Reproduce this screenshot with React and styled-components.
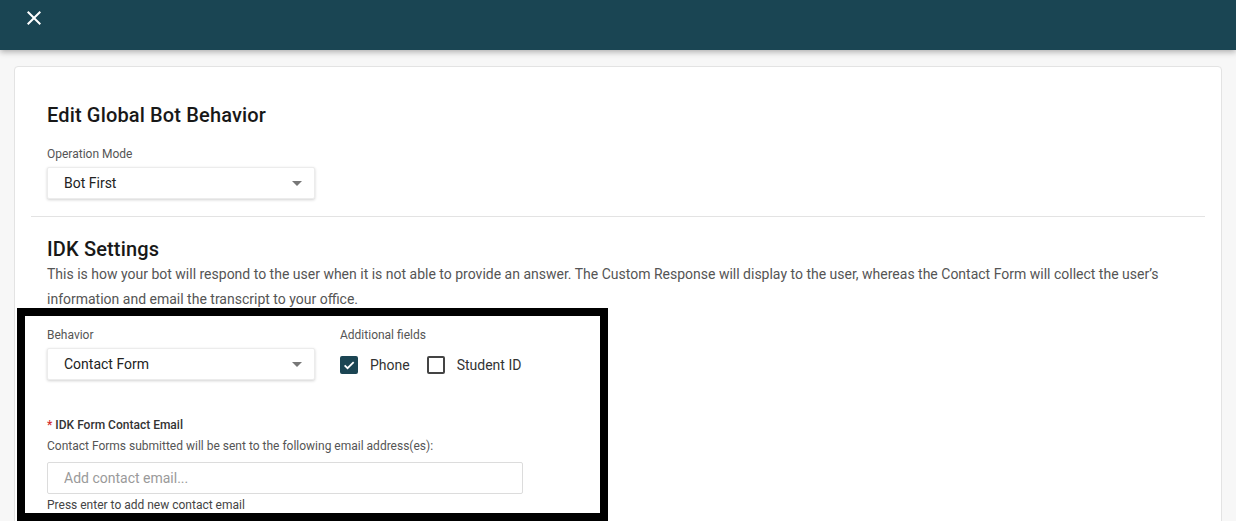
import React from "react";
import styled, { createGlobalStyle } from "styled-components";

const GlobalStyle = createGlobalStyle`
  html, body {
    margin: 0;
    padding: 0;
    background: #f7f7f7;
    font-family: Roboto, "Liberation Sans", Arial, sans-serif;
    overflow: hidden;
  }
`;

const Header = styled.header`
  height: 50px;
  background: #1a4553;
  box-shadow: 0 2px 6px rgba(0, 0, 0, 0.3);
  display: flex;
  align-items: center;
  padding-left: 22px;
  position: relative;
  z-index: 1;
`;

const CloseButton = styled.button`
  width: 24px;
  height: 24px;
  margin-top: -14px;
  padding: 0;
  border: none;
  background: transparent;
  display: flex;
  align-items: center;
  justify-content: center;
  cursor: pointer;
`;

const Page = styled.main`
  padding: 16px 14px 0;
`;

const Card = styled.div`
  background: #fff;
  border: 1px solid #e3e3e3;
  border-radius: 4px;
  padding: 36px 16px 80px;
`;

const Section = styled.section`
  padding: 0 16px;
`;

const Title = styled.h2`
  margin: 0;
  font-size: 20px;
  line-height: 24px;
  font-weight: 500;
  letter-spacing: 0.15px;
  color: #181818;
`;

const Label = styled.div`
  font-size: 12px;
  line-height: 16px;
  color: ${(p) => (p.$strong ? "#333" : "#555")};
  font-weight: ${(p) => (p.$strong ? 500 : 400)};
  margin-top: ${(p) => p.$mt || 0}px;
`;

const Required = styled.span`
  color: #d32f2f;
  margin-right: 3px;
`;

const SelectBox = styled.div`
  margin-top: 5px;
  width: 268px;
  height: 32px;
  box-sizing: border-box;
  background: #fff;
  border: 1px solid #ececec;
  border-radius: 2px;
  box-shadow: 0 1px 3px rgba(0, 0, 0, 0.18);
  display: flex;
  align-items: center;
  justify-content: space-between;
  padding: 0 12px 0 16px;
  font-size: 14px;
  color: #222;
`;

const Caret = styled.span`
  width: 0;
  height: 0;
  border-left: 5px solid transparent;
  border-right: 5px solid transparent;
  border-top: 5px solid #777;
`;

const Divider = styled.hr`
  border: none;
  border-top: 1px solid #e3e3e3;
  margin: 17px 0 20px;
`;

const Paragraph = styled.p`
  margin: 1px 0 0;
  font-size: 14px;
  line-height: 25px;
  color: #555;
`;

const Highlight = styled.div`
  position: relative;
  width: 553px;
  margin-top: 15px;

  &::after {
    content: "";
    position: absolute;
    top: -19px;
    left: -30px;
    right: -8px;
    bottom: -8px;
    border: 8px solid #000;
    pointer-events: none;
  }
`;

const Row = styled.div`
  display: flex;
  gap: 25px;
`;

const Field = styled.div`
  display: flex;
  flex-direction: column;
`;

const CheckRow = styled.div`
  display: flex;
  align-items: center;
  margin-top: 13px;
`;

const CheckItem = styled.label`
  display: flex;
  align-items: center;
  gap: 12px;
  margin-right: 17px;
  font-size: 14px;
  color: #333;
`;

const Box = styled.span`
  width: 18px;
  height: 18px;
  box-sizing: border-box;
  border-radius: 2px;
  border: 2px solid ${(p) => (p.$checked ? "#1b4553" : "#444")};
  background: ${(p) => (p.$checked ? "#1b4553" : "#fff")};
  display: flex;
  align-items: center;
  justify-content: center;
`;

const EmailInput = styled.input`
  margin-top: 8px;
  width: 476px;
  height: 32px;
  box-sizing: border-box;
  border: 1px solid #dcdcdc;
  border-radius: 2px;
  padding: 0 16px;
  font-family: inherit;
  font-size: 14px;
  color: #222;
  outline: none;

  &::placeholder {
    color: #9a9a9a;
  }
`;

const Hint = styled.div`
  margin-top: 3px;
  font-size: 12px;
  line-height: 16px;
  color: #444;
`;

function Checkbox({ checked, children }) {
  return (
    <CheckItem>
      <Box $checked={checked}>
        {checked && (
          <svg width="14" height="14" viewBox="0 0 24 24">
            <path
              d="M4.5 12.5l5 5L20 7"
              fill="none"
              stroke="#fff"
              strokeWidth="3"
            />
          </svg>
        )}
      </Box>
      {children}
    </CheckItem>
  );
}

export default function App() {
  return (
    <>
      <GlobalStyle />
      <Header>
        <CloseButton aria-label="Close">
          <svg width="24" height="24" viewBox="0 0 24 24">
            <path
              d="M19 6.41L17.59 5 12 10.59 6.41 5 5 6.41 10.59 12 5 17.59 6.41 19 12 13.41 17.59 19 19 17.59 13.41 12z"
              fill="#fff"
            />
          </svg>
        </CloseButton>
      </Header>
      <Page>
        <Card>
          <Section>
            <Title>Edit Global Bot Behavior</Title>
            <Label $mt={19}>Operation Mode</Label>
            <SelectBox>
              Bot First
              <Caret />
            </SelectBox>
          </Section>
          <Divider />
          <Section>
            <Title>IDK Settings</Title>
            <Paragraph>
              This is how your bot will respond to the user when it is not able
              to provide an answer. The Custom Response will display to the
              user, whereas the Contact Form will collect the user’s
              information and email the transcript to your office.
            </Paragraph>
            <Highlight>
              <Row>
                <Field>
                  <Label>Behavior</Label>
                  <SelectBox>
                    Contact Form
                    <Caret />
                  </SelectBox>
                </Field>
                <Field>
                  <Label>Additional fields</Label>
                  <CheckRow>
                    <Checkbox checked>Phone</Checkbox>
                    <Checkbox>Student ID</Checkbox>
                  </CheckRow>
                </Field>
              </Row>
              <Label $strong $mt={37}>
                <Required>*</Required>IDK Form Contact Email
              </Label>
              <Label $mt={5}>
                Contact Forms submitted will be sent to the following email
                address(es):
              </Label>
              <EmailInput placeholder="Add contact email..." />
              <Hint>Press enter to add new contact email</Hint>
            </Highlight>
          </Section>
        </Card>
      </Page>
    </>
  );
}
